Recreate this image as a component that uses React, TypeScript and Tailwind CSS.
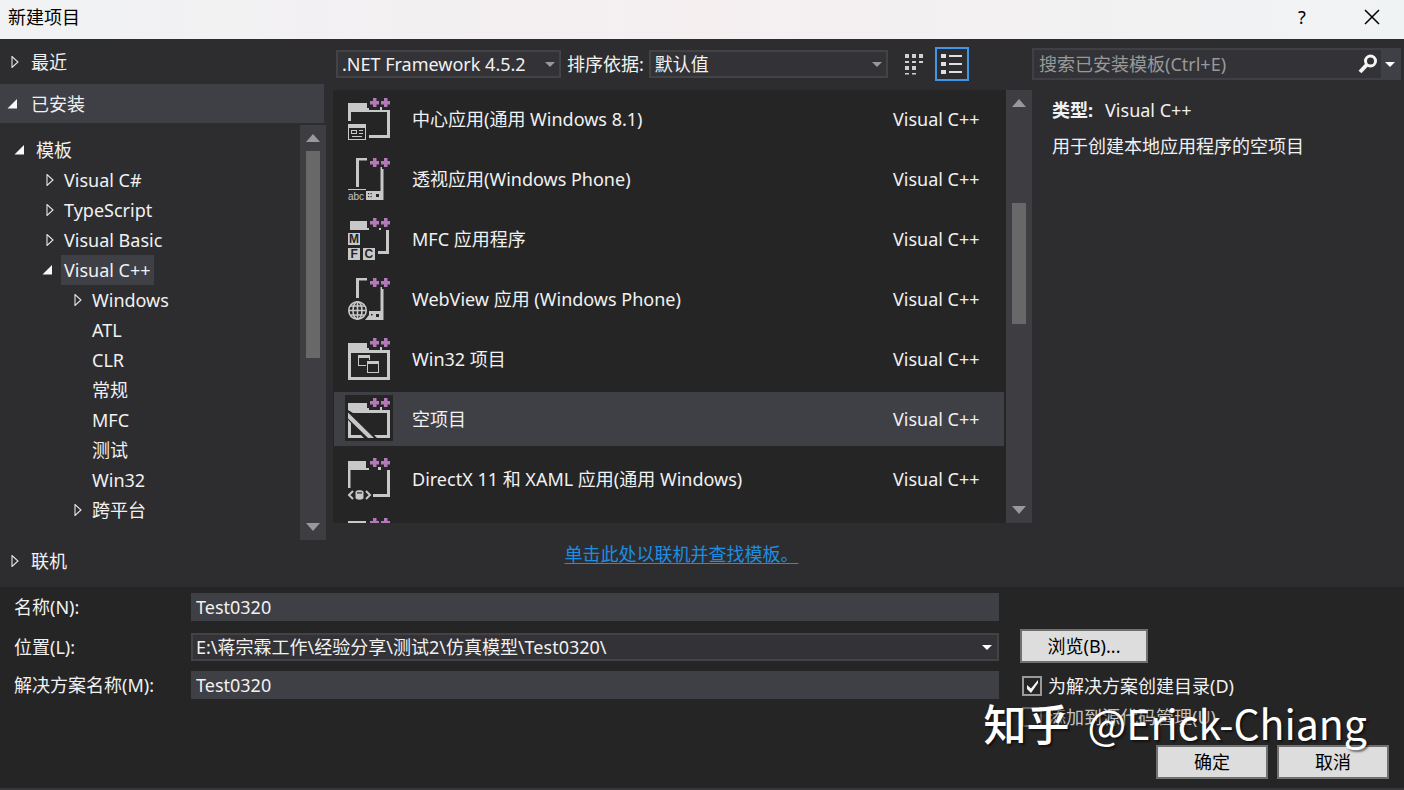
import { useState } from "react";
import type { ReactNode } from "react";

type TreeItem = {
  label: string;
  level: number;
  state?: "open" | "closed";
};

type Template = {
  name: string;
  icon: ReactNode;
};

const treeItems: TreeItem[] = [
  { label: "模板", level: 0, state: "open" },
  { label: "Visual C#", level: 1, state: "closed" },
  { label: "TypeScript", level: 1, state: "closed" },
  { label: "Visual Basic", level: 1, state: "closed" },
  { label: "Visual C++", level: 1, state: "open" },
  { label: "Windows", level: 2, state: "closed" },
  { label: "ATL", level: 2 },
  { label: "CLR", level: 2 },
  { label: "常规", level: 2 },
  { label: "MFC", level: 2 },
  { label: "测试", level: 2 },
  { label: "Win32", level: 2 },
  { label: "跨平台", level: 2, state: "closed" },
];

const levelPadding = ["pl-[14px]", "pl-[42px]", "pl-[70px]"];

function Arrow({ state }: { state?: "open" | "closed" }) {
  return (
    <svg className="h-3 w-3 shrink-0" viewBox="0 0 12 12" aria-hidden="true">
      {state === "open" && <path d="M10 1v9.500H.5z" fill="#f8f8f8" />}
      {state === "closed" && <path d="M5 .5v11L11 6z" fill="none" stroke="#e6e6e6" strokeWidth="1.100" />}
    </svg>
  );
}

function Caret({ className }: { className: string }) {
  return (
    <svg className={className} width="10" height="5" viewBox="0 0 10 5" aria-hidden="true">
      <path d="M0 0h10L5 5z" fill="currentColor" />
    </svg>
  );
}

/* Purple "++" badge on every C++ template */
function PlusPlus() {
  return (
    <g fill="#b478b8">
      <path d="M28 3h3.500v3H34v3.500h-2.500V12H28V9.500h-3V6h3z" />
      <path d="M39 3h3.500v3H45v3.500h-2.500V12H39V9.500h-3V6h3z" />
    </g>
  );
}

function Icon({ children, active }: { children: ReactNode; active: boolean }) {
  return (
    <svg width="48" height="48" viewBox="0 0 48 48" className="shrink-0" aria-hidden="true">
      {active && <rect width="48" height="46" fill="#252526" />}
      <g fill="#c8c8c8">{children}</g>
      <PlusPlus />
    </svg>
  );
}

const hubIcon = (
  <>
    <path d="M3 8h19v5h2v2h11v-3h2v3h8v28H24v-3h18V17H6v9H3z" />
    <path d="M3 29h18v16H3zM4 33v11h16V33z" fillRule="evenodd" />
    <path d="M6 35h6v4H6zM7 36v2h4v-2zM14 35h4v1h-4zM14 38h4v1h-4zM7 41h10v1H7z" fillRule="evenodd" />
  </>
);

const phoneIcon = (
  <>
    <path d="M11 3h11v2.500h-8V32h-3zM35.500 12h1.500v2h1.500v31H21v-9h14.500z" />
    <path d="M3 34h18v1H3z" />
    <path d="M31 39h3v3h-3zM23 38h1.200v1.200H23zM25.500 38h1.200v1.200h-1.200zM23 41h1.200v1.200H23zM25.500 41h1.200v1.200h-1.200z" fill="#252526" />
    <text x="3" y="45" fontSize="10" fontFamily="Liberation Sans">abc</text>
  </>
);

const mfcIcon = (
  <>
    <path d="M5 6h17v7h2v2H5zM34 13h2v2h-2zM41 15h3v24H33v-3h8z" />
    <path d="M3 18h12v12H3zM3 33h12v12H3zM18 33h12v12H18z" />
    <g fill="#252526" fontSize="12" fontWeight="700" fontFamily="Liberation Sans">
      <text x="4" y="28">M</text>
      <text x="5.500" y="43">F</text>
      <text x="19.500" y="43">C</text>
    </g>
  </>
);

const webViewIcon = (
  <>
    <path d="M11 3h11v2.500h-8V23h-3zM35.500 12h1.500v2h1.500v31H20l4-5v-4h11.500z" />
    <path d="M31 39h3v3h-3zM26 39h1.500v1.500H26z" fill="#252526" />
    <circle cx="12.500" cy="35.500" r="10.500" fill="#252526" />
    <g fill="none" stroke="#c8c8c8" strokeWidth="1.600">
      <circle cx="12.500" cy="35.500" r="8.700" />
      <ellipse cx="12.500" cy="35.500" rx="4.500" ry="8.700" />
      <path d="M12.500 27v17M4 35.500h17M5.500 31h14M5.500 40h14" />
    </g>
  </>
);

const win32Icon = (
  <>
    <path d="M3 8h19v5h2v2h11v-3h2v3h8v30H3zM6 18v24h36V18z" fillRule="evenodd" />
    <path d="M13 20h12v11H13zM14 23v7h10v-7z" fillRule="evenodd" />
    <path d="M21 25h14v14H21z" fill="#252526" />
    <path d="M22 26h12v12H22zM23 29v8h10v-8z" fillRule="evenodd" />
  </>
);

const emptyIcon = (
  <>
    <path d="M3 8h19v5h2v2h11v-3h2v3h8v28H32l-3-3h13V18H8l-5-3zM3 25l3 3v12h10l3 3H3z" />
    <path d="M3 17.500L29 43h-6L3 23.500z" />
  </>
);

const directXIcon = (
  <>
    <path d="M3 6h18v7h3v2H5.500v18H3zM33 12h3v3h-3zM42 15h3v27H28v-3h14z" />
    <path d="M8 36l-4 4 4 4M21 36l4 4-4 4" fill="none" stroke="#c8c8c8" strokeWidth="2" />
    <path d="M10.500 37c0-2.500 8-2.500 8 0v5.500c0 3-8 3-8 0z" />
    <path d="M12 37.300h5v1.200h-5z" fill="#252526" />
  </>
);

const templates: Template[] = [
  { name: "中心应用(通用 Windows 8.1)", icon: hubIcon },
  { name: "透视应用(Windows Phone)", icon: phoneIcon },
  { name: "MFC 应用程序", icon: mfcIcon },
  { name: "WebView 应用 (Windows Phone)", icon: webViewIcon },
  { name: "Win32 项目", icon: win32Icon },
  { name: "空项目", icon: emptyIcon },
  { name: "DirectX 11 和 XAML 应用(通用 Windows)", icon: directXIcon },
];

function Scrollbar({ thumb }: { thumb: string }) {
  return (
    <div className="flex w-[26px] shrink-0 flex-col items-center bg-[#3e3e42] text-[#999999]">
      <svg className="mt-[9px] h-2 w-[14px] shrink-0" viewBox="0 0 14 8" aria-hidden="true">
        <path d="M7 0l7 8H0z" fill="currentColor" />
      </svg>
      <div className={`w-[14px] bg-[#686868] ${thumb}`} />
      <svg className="mt-auto mb-[9px] h-2 w-[14px] shrink-0" viewBox="0 0 14 8" aria-hidden="true">
        <path d="M0 0h14L7 8z" fill="currentColor" />
      </svg>
    </div>
  );
}

function Dropdown({ label, value, className }: { label: string; value: string; className: string }) {
  return (
    <div className={`relative ${className}`}>
      <select
        aria-label={label}
        className="h-7 w-full appearance-none border-2 border-[#434346] bg-[#333337] pr-6 pl-1 leading-6 outline-none"
      >
        <option>{value}</option>
      </select>
      <Caret className="pointer-events-none absolute top-3 right-[6px] text-[#999999]" />
    </div>
  );
}

function TitleBar() {
  return (
    <header className="flex h-[39px] items-center justify-between bg-linear-to-r from-[#f0f2f4] via-[#f5eff0] to-[#f0f3f4] pb-[6px] pl-2 text-black">
      <h1>新建项目</h1>
      <div className="flex">
        <button className="w-[76px]" aria-label="帮助">?</button>
        <button className="flex w-16 items-center justify-center" aria-label="关闭">
          <svg width="16" height="16" viewBox="0 0 16 16" aria-hidden="true">
            <path d="M1 1l14 14M15 1L1 15" stroke="#000" strokeWidth="1.500" />
          </svg>
        </button>
      </div>
    </header>
  );
}

function Sidebar() {
  const [current, setCurrent] = useState("Visual C++");

  return (
    <nav className="flex w-[333px] shrink-0 flex-col">
      <button className="flex h-[45px] items-center gap-3 pl-[7px]">
        <Arrow state="closed" />
        最近
      </button>
      <button className="mr-[9px] flex h-[39px] items-center gap-3 bg-[#3f3f46] pl-[7px]">
        <Arrow state="open" />
        已安装
      </button>

      <div className="mt-[2px] mr-[7px] flex h-[415px]">
        <ul className="flex-1 pt-[10px]">
          {treeItems.map((item) => (
            <li key={item.label} className={`flex h-[30px] items-center ${levelPadding[item.level]}`}>
              <Arrow state={item.state} />
              <button
                onClick={() => setCurrent(item.label)}
                className={`ml-[7px] h-[30px] px-[3px] ${current === item.label ? "bg-[#3f3f46]" : ""}`}
              >
                {item.label}
              </button>
            </li>
          ))}
        </ul>
        <Scrollbar thumb="mt-[9px] h-[207px]" />
      </div>

      <button className="flex h-[42px] items-center gap-3 pl-[7px]">
        <Arrow state="closed" />
        联机
      </button>
    </nav>
  );
}

function TemplateList() {
  const [selected, setSelected] = useState("空项目");

  return (
    <main className="min-w-0 flex-1">
      <div className="flex h-[51px] items-center pb-[2px] pl-[3px]">
        <Dropdown label="框架" value=".NET Framework 4.5.2" className="w-[225px]" />
        <span className="mr-[5px] ml-[6px] whitespace-nowrap">排序依据:</span>
        <Dropdown label="排序依据" value="默认值" className="w-[239px]" />
        <button className="ml-[9px] flex h-[34px] w-[34px] items-center justify-center" aria-label="小图标">
          <svg width="20" height="22" viewBox="0 0 20 22" fill="#d0d0d0" aria-hidden="true">
            <path d="M1 1h4v4H1zM8 1h4v4H8zM15 1h4v4h-4zM1 8h4v2H1zM8 8h4v2H8zM15 8h4v2h-4zM1 13h4v4H1zM8 13h4v4H8zM1 20h4v1.500H1zM8 20h4v1.500H8z" />
          </svg>
        </button>
        <button className="ml-1 flex h-[34px] w-[34px] items-center justify-center border-2 border-[#4097e8]" aria-label="中等图标">
          <svg width="22" height="20" viewBox="0 0 22 20" fill="#e0e0e0" aria-hidden="true">
            <path d="M0 0h5v4H0zM8 1h13v2H8zM0 8h5v4H0zM8 9h13v2H8zM0 16h5v4H0zM8 17h13v2H8z" />
          </svg>
        </button>
      </div>

      <div className="flex h-[433px]">
        <ul className="flex-1 overflow-hidden bg-[#252526] pr-[2px] pl-px">
          {templates.map((template) => (
            <li key={template.name} className="pt-[2px] pb-1">
              <button
                onClick={() => setSelected(template.name)}
                className={`flex h-[54px] w-full items-center pr-[18px] pl-[11px] text-left ${
                  selected === template.name ? "bg-[#3f3f46]" : ""
                }`}
              >
                <Icon active={selected === template.name}>{template.icon}</Icon>
                <span className="ml-[19px] flex-1">{template.name}</span>
                <span className="w-[93px]">Visual C++</span>
              </button>
            </li>
          ))}
          {/* next template, cut off by the edge of the list */}
          <li className="pt-[5px] pl-[11px]">
            <Icon active={false}>{directXIcon}</Icon>
          </li>
        </ul>
        <Scrollbar thumb="mt-[96px] h-[121px]" />
      </div>

      <div className="flex h-16 items-center justify-center pr-[2px] pb-[2px]">
        <a href="#online" className="text-[#1c8fe3] underline underline-offset-2">
          单击此处以联机并查找模板。
        </a>
      </div>
    </main>
  );
}

function Details() {
  return (
    <aside className="w-[372px] shrink-0 pt-[9px] pr-[3px]">
      <div className="flex h-8 items-center border-2 border-[#3f3f46] bg-[#333337]">
        <input
          type="search"
          aria-label="搜索已安装模板"
          placeholder="搜索已安装模板(Ctrl+E)"
          className="min-w-0 flex-1 bg-transparent pl-[5px] outline-none placeholder:text-[#999999]"
        />
        <button className="mr-[3px]" aria-label="搜索">
          <svg width="20" height="20" viewBox="0 0 20 20" fill="none" stroke="#f5f5f5" aria-hidden="true">
            <circle cx="12.500" cy="7" r="5" strokeWidth="3" />
            <path d="M9 10.500L2 18" strokeWidth="4" />
          </svg>
        </button>
        <button className="flex h-full w-[18px] items-center justify-center bg-[#3f3f46]" aria-label="搜索选项">
          <Caret className="text-white" />
        </button>
      </div>
      <div className="px-5 pt-3">
        <p className="h-9 leading-9">
          <strong className="mr-3">类型:</strong>
          Visual C++
        </p>
        <p className="h-9 leading-9">用于创建本地应用程序的空项目</p>
      </div>
    </aside>
  );
}

function ProjectForm() {
  return (
    <form className="flex flex-1 border-b-2 border-[#37373a] bg-[#252526]" onSubmit={(e) => e.preventDefault()}>
      <div className="flex-1 pt-[6px] pl-[14px]">
        <div className="mb-3 flex h-7 items-center">
          <label htmlFor="name" className="w-[177px]">名称(N):</label>
          <input id="name" defaultValue="Test0320" className="h-7 min-w-0 flex-1 bg-[#3f3f46] px-[5px] outline-none" />
        </div>
        <div className="mb-[10px] flex h-7 items-center">
          <label htmlFor="location" className="w-[177px]">位置(L):</label>
          <div className="flex h-7 flex-1 items-center border-2 border-[#434346] bg-[#333337]">
            <input
              id="location"
              defaultValue="E:\蒋宗霖工作\经验分享\测试2\仿真模型\Test0320\"
              className="min-w-0 flex-1 bg-transparent px-[3px] outline-none"
            />
            <button type="button" className="px-[5px]" aria-label="最近的位置">
              <Caret className="text-white" />
            </button>
          </div>
        </div>
        <div className="flex h-7 items-center">
          <label htmlFor="solution" className="w-[177px]">解决方案名称(M):</label>
          <input id="solution" defaultValue="Test0320" className="h-7 min-w-0 flex-1 bg-[#3f3f46] px-[5px] outline-none" />
        </div>
      </div>

      <div className="ml-[21px] w-[384px] shrink-0 pt-[42px] pr-[15px]">
        <button type="button" className="h-[34px] w-32 border-2 border-[#707070] bg-[#dddddd] text-black">
          浏览(B)...
        </button>
        <div className="mt-[7px] ml-[2px]">
          <label className="flex h-[31px] items-center gap-[6px]">
            <span className="grid">
              <input
                type="checkbox"
                defaultChecked
                className="peer col-start-1 row-start-1 h-5 w-5 appearance-none border-2 border-[#999999]"
              />
              <svg className="pointer-events-none col-start-1 row-start-1 hidden h-5 w-5 peer-checked:block" viewBox="0 0 20 20" aria-hidden="true">
                <path d="M5 9v4l4 4 7-10V4L9 12.500z" fill="#f5f5f5" />
              </svg>
            </span>
            为解决方案创建目录(D)
          </label>
          <label className="flex h-[31px] items-center gap-[6px] text-[#c4c4c4]">
            <input type="checkbox" className="h-5 w-5 appearance-none border-2 border-[#656565]" />
            添加到源代码管理(U)
          </label>
        </div>
        <div className="mt-[13px] flex justify-end gap-[9px]">
          <button type="submit" className="h-[34px] w-28 border-2 border-[#707070] bg-[#dddddd] text-black">确定</button>
          <button type="button" className="h-[34px] w-28 border-2 border-[#707070] bg-[#dddddd] text-black">取消</button>
        </div>
      </div>
    </form>
  );
}

export default function App() {
  return (
    <div className="relative flex min-h-screen flex-col bg-[#2d2d30] font-['Noto_Sans','Noto_Sans_CJK_SC',sans-serif] text-[18px] leading-6 text-[#f1f1f1]">
      <TitleBar />
      <div className="flex h-[548px]">
        <Sidebar />
        <TemplateList />
        <Details />
      </div>
      <ProjectForm />

      {/* Watermark */}
      <div className="pointer-events-none absolute right-[37px] bottom-[38px] flex items-center gap-[18px] font-['Noto_Sans_CJK_SC',sans-serif] text-[41px] leading-[60px] whitespace-nowrap text-white [text-shadow:2px_2px_2px_#00000080]">
        <span className="text-[43px] font-medium">知乎</span>
        <span>@Erick-Chiang</span>
      </div>
    </div>
  );
}
